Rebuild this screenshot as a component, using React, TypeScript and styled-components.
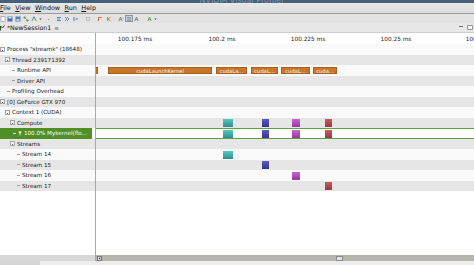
import React from "react";
import styled, { createGlobalStyle, css } from "styled-components";

const GlobalStyle = createGlobalStyle`
  html, body { margin: 0; padding: 0; background: #ffffff; }
  body { font-family: "DejaVu Sans", "Liberation Sans", sans-serif; }
  #root { width: 474px; height: 265px; }
`;

const Window = styled.div`
  width: 474px;
  height: 265px;
  display: flex;
  flex-direction: column;
  overflow: hidden;
  background: #ffffff;
`;

const TitleBar = styled.div`
  height: 3px;
  flex: none;
  background: #46607a;
  display: flex;
  justify-content: center;
  align-items: flex-end;
  overflow: hidden;
`;

const TitleText = styled.span`
  font-size: 8px;
  line-height: 5px;
  color: #7f96ad;
  white-space: nowrap;
  margin-left: 10px;
`;

const MenuBar = styled.div`
  height: 10px;
  flex: none;
  display: flex;
  align-items: center;
  gap: 4.5px;
  background: linear-gradient(#e8e8e8, #dcdcdc);
  font-size: 6.4px;
  color: #111;
`;

const MenuItem = styled.span`
  white-space: nowrap;
`;

const Mnemonic = styled.u`
  text-decoration-thickness: 0.6px;
  text-underline-offset: 0.8px;
`;

const MenuRule = styled.div`
  height: 1px;
  flex: none;
  background: #9c9c9c;
`;

const Toolbar = styled.div`
  height: 9px;
  flex: none;
  display: flex;
  align-items: center;
  background: #e3e3e3;
`;

const ToolSlot = styled.span<{ $ml: number; $w?: number; $boxed?: boolean }>`
  display: flex;
  align-items: center;
  justify-content: center;
  flex: none;
  width: ${(p) => p.$w ?? 6}px;
  height: 7px;
  margin-left: ${(p) => p.$ml}px;
  ${(p) =>
    p.$boxed &&
    css`
      background: #c9d0d8;
      box-shadow: inset 0 0 0 1px #8c96a2;
    `}
`;

const TabBar = styled.div`
  height: 10px;
  flex: none;
  box-sizing: border-box;
  display: flex;
  align-items: center;
  background: #e7e7e7;
  border-bottom: 1px solid #cdcdcd;
`;

const Tab = styled.div`
  display: flex;
  align-items: center;
  height: 100%;
  font-size: 6.2px;
  color: #111;
  white-space: nowrap;
`;

const TabLabel = styled.span`
  margin-left: 2px;
`;

const TabMenu = styled.span`
  margin-left: 3px;
  color: #777;
  font-size: 5.5px;
`;

const WinControls = styled.div`
  margin-left: auto;
  display: flex;
  align-items: center;
  gap: 3px;
  padding-right: 1px;
`;

const Workspace = styled.div`
  flex: 1;
  min-height: 0;
  display: flex;
`;

const TreePane = styled.div`
  width: 95px;
  flex: none;
  display: flex;
  flex-direction: column;
  background: #ffffff;
  overflow: hidden;
`;

const Sash = styled.div`
  width: 1px;
  flex: none;
  background: #a9a9a9;
`;

const TimelinePane = styled.div`
  flex: 1;
  min-width: 0;
  display: flex;
  flex-direction: column;
  background: #ffffff;
  overflow: hidden;
`;

const Header = styled.div`
  height: 11px;
  flex: none;
  position: relative;
  background: #ffffff;
`;

const TickLabel = styled.span`
  position: absolute;
  top: 2.5px;
  transform: translateX(-50%);
  font-size: 5.8px;
  line-height: 7px;
  color: #1c1c1c;
  white-space: nowrap;
`;

const Row = styled.div<{ $alt: boolean }>`
  height: 10.5px;
  flex: none;
  position: relative;
  background: ${(p) => (p.$alt ? "#e6e6e6" : "#fafafa")};
`;

const TreeRow = styled(Row)<{ $selected?: boolean; $pl: number }>`
  display: flex;
  align-items: center;
  padding-left: ${(p) => p.$pl}px;
  font-size: 5.6px;
  color: #1a1a1a;
  white-space: nowrap;
  overflow: hidden;
  ${(p) =>
    p.$selected &&
    css`
      background: #4f8f26;
      color: #ffffff;
      margin-right: 3px;
    `}
`;

const TrackRow = styled(Row)<{ $selected?: boolean }>`
  ${(p) =>
    p.$selected &&
    css`
      background: #ffffff;
      box-shadow: inset 0 1px 0 #5f9d3f, inset 0 -1px 0 #5f9d3f;
    `}
`;

const Expander = styled.span<{ $mr: number }>`
  position: relative;
  flex: none;
  box-sizing: border-box;
  width: 5px;
  height: 5px;
  margin-right: ${(p) => p.$mr}px;
  border: 0.7px solid #a4a4a4;
  background: #f4f4f4;
  &::after {
    content: "";
    position: absolute;
    left: 0.8px;
    right: 0.8px;
    top: 1.8px;
    height: 0.8px;
    background: #6b6b6b;
  }
`;

const LeafDot = styled.span<{ $mr: number; $light?: boolean }>`
  flex: none;
  width: 5px;
  height: 5px;
  margin-right: ${(p) => p.$mr}px;
  display: flex;
  align-items: center;
  justify-content: center;
  &::after {
    content: "";
    width: 2.5px;
    height: 0.8px;
    background: ${(p) => (p.$light ? "#d8ecd0" : "#a0a0a0")};
  }
`;

const FilterIcon = styled.svg`
  flex: none;
  width: 4px;
  height: 5px;
  margin-right: 2px;
`;

const Filler = styled.div`
  flex: 1;
  background: #ffffff;
`;

const ApiBar = styled.div`
  position: absolute;
  top: 1.6px;
  height: 7.4px;
  box-sizing: border-box;
  background: #c7772c;
  border: 0.5px solid #a95f1d;
  color: #fff4e8;
  font-size: 5.2px;
  line-height: 6.4px;
  text-align: center;
  overflow: hidden;
  white-space: nowrap;
`;

const Kernel = styled.div<{ $top: string; $bottom: string }>`
  position: absolute;
  top: 1.5px;
  height: 8px;
  background: linear-gradient(${(p) => p.$top}, ${(p) => p.$bottom});
`;

const ScrollRow = styled.div`
  height: 6px;
  flex: none;
  display: flex;
`;

const ScrollLeft = styled.div`
  width: 95px;
  flex: none;
  background: #d8d8d8;
`;

const ScrollTrack = styled.div`
  flex: 1;
  position: relative;
  background: #b5b5ad;
  display: flex;
  align-items: center;
`;

const ArrowBtn = styled.span`
  width: 5px;
  height: 5px;
  margin-left: 1px;
  box-sizing: border-box;
  background: #e8e8e8;
  border: 0.5px solid #777;
  display: flex;
  align-items: center;
  justify-content: center;
`;

const Thumb = styled.span`
  position: absolute;
  top: 0.5px;
  height: 5px;
  width: 7px;
  box-sizing: border-box;
  background: #e2e2e2;
  border: 0.5px solid #8a8a8a;
`;

const StatusBar = styled.div`
  height: 4px;
  flex: none;
  display: flex;
  background: #ededed;
`;

const StatusSeg = styled.div`
  width: 40px;
  background: #d6d6d6;
`;

/* ---------- icons ---------- */

const Ico = ({ children, w = 6 }: { children: React.ReactNode; w?: number }) => (
  <svg width={w} height={6} viewBox={`0 0 ${w} 6`}>
    {children}
  </svg>
);

type ToolItem = { ml: number; w?: number; boxed?: boolean; icon: React.ReactNode };

const toolItems: ToolItem[] = [
  { ml: 0, icon: <Ico><rect x="1" y="0.5" width="4" height="5" fill="#fff" stroke="#8a8a8a" strokeWidth="0.6" /></Ico> },
  { ml: 1, icon: <Ico><rect x="0.5" y="0.5" width="5" height="5" fill="#4a6fb0" /><rect x="1.5" y="0.8" width="3" height="1.6" fill="#e8eef8" /></Ico> },
  { ml: 2, icon: <Ico><rect x="0.5" y="0.5" width="5" height="5" fill="#5b7bb8" /><rect x="1.5" y="3.2" width="3" height="1.6" fill="#dfe6f4" /></Ico> },
  { ml: 2, icon: <Ico><circle cx="1.5" cy="1.5" r="1.1" fill="#4c9a3c" /><circle cx="4.5" cy="4.5" r="1.1" fill="#4c9a3c" /><path d="M1.5 1.5 L4.5 4.5" stroke="#3a7a2c" strokeWidth="0.6" /></Ico> },
  { ml: 2, icon: <Ico><path d="M0.8 5 L3 1 L5.2 5" fill="none" stroke="#3f8f5a" strokeWidth="0.9" /><circle cx="3" cy="1.2" r="0.8" fill="#5a7bc0" /></Ico> },
  { ml: 2, w: 3, icon: <Ico w={3}><path d="M0.3 2.5 L2.7 2.5 L1.5 4 Z" fill="#444" /></Ico> },
  { ml: 5, w: 3, icon: <Ico w={3}><circle cx="1.5" cy="3.5" r="0.6" fill="#888" /></Ico> },
  { ml: 6, icon: <Ico><path d="M1 1.5 L5 1.5 M1 3 L4 3 M1 4.5 L5 4.5" stroke="#4d6fb8" strokeWidth="0.8" /></Ico> },
  { ml: 2, icon: <Ico><path d="M1 1 L3 3 L1 5 M3 1 L5 3 L3 5" fill="none" stroke="#4d6fb8" strokeWidth="0.8" /></Ico> },
  { ml: 3, icon: <Ico><path d="M1 1 L1 5 M2.5 3 L5 3" stroke="#4d6fb8" strokeWidth="0.9" /></Ico> },
  { ml: 6, icon: <Ico><rect x="1.5" y="1.5" width="3" height="3" fill="none" stroke="#a8a8a8" strokeWidth="0.6" /></Ico> },
  { ml: 6, icon: <Ico><path d="M1.5 5 L1.5 1.5 L4.5 1.5" fill="none" stroke="#c4622a" strokeWidth="0.9" /></Ico> },
  { ml: 3, icon: <Ico><path d="M1.5 1 L1.5 5 M4.5 1 L1.8 3 L4.5 5" fill="none" stroke="#d07a2a" strokeWidth="0.9" /></Ico> },
  { ml: 6, icon: <Ico><path d="M0.8 5 L2.5 1 L4.2 5 M1.5 3.6 L3.5 3.6" fill="none" stroke="#666" strokeWidth="0.7" /><path d="M4.8 2 L5.8 2" stroke="#666" strokeWidth="0.6" /></Ico> },
  { ml: 1, w: 8, boxed: true, icon: <Ico><rect x="1" y="1" width="4" height="4" fill="#8c9db2" /><path d="M1 3 L5 3" stroke="#eef" strokeWidth="0.5" /></Ico> },
  { ml: 1, icon: <Ico><path d="M0.8 5 L2.5 1 L4.2 5 M1.5 3.6 L3.5 3.6" fill="none" stroke="#666" strokeWidth="0.7" /></Ico> },
  { ml: 7, icon: <Ico><path d="M0.8 5 L2.5 1 L4.2 5 M1.5 3.6 L3.5 3.6" fill="none" stroke="#3f9a4a" strokeWidth="0.8" /></Ico> },
  { ml: 1, w: 3, icon: <Ico w={3}><path d="M0.3 2.5 L2.7 2.5 L1.5 4 Z" fill="#444" /></Ico> },
];

/* ---------- data ---------- */

type Marker = "box" | "dot";
type TreeItem = {
  label: string;
  pl: number;
  marker: Marker;
  gap: number;
  selected?: boolean;
};

const treeItems: TreeItem[] = [
  { label: 'Process "streamk" (18648)', pl: 0, marker: "box", gap: 2 },
  { label: "Thread 239171392", pl: 5, marker: "box", gap: 2 },
  { label: "Runtime API", pl: 11, marker: "dot", gap: 1 },
  { label: "Driver API", pl: 11, marker: "dot", gap: 1 },
  { label: "Profiling Overhead", pl: 6, marker: "dot", gap: 1 },
  { label: "[0] GeForce GTX 970", pl: 0, marker: "box", gap: 2 },
  { label: "Context 1 (CUDA)", pl: 5, marker: "box", gap: 2 },
  { label: "Compute", pl: 10, marker: "box", gap: 2 },
  { label: "100.0% Mykernel(flo...", pl: 12, marker: "dot", gap: 1, selected: true },
  { label: "Streams", pl: 10, marker: "box", gap: 2 },
  { label: "Stream 14", pl: 16, marker: "dot", gap: 1 },
  { label: "Stream 15", pl: 16, marker: "dot", gap: 1 },
  { label: "Stream 16", pl: 16, marker: "dot", gap: 1 },
  { label: "Stream 17", pl: 16, marker: "dot", gap: 1 },
];

const ticks = [
  { x: 39, label: "100.175 ms" },
  { x: 126, label: "100.2 ms" },
  { x: 212, label: "100.225 ms" },
  { x: 300, label: "100.25 ms" },
  { x: 387, label: "100.275 ms" },
];

const apiCalls = [
  { left: -1, width: 2.5, label: "" },
  { left: 12, width: 104, label: "cudaLaunchKernel" },
  { left: 120, width: 31, label: "cudaLa..." },
  { left: 155, width: 27, label: "cudaL..." },
  { left: 185, width: 29, label: "cudaL..." },
  { left: 217, width: 24, label: "cuda..." },
];

const kernelColors = [
  { left: 127.3, width: 9.4, top: "#5cc4c4", bottom: "#2f8e8e" },
  { left: 165.7, width: 7.6, top: "#5a5ac0", bottom: "#33338e" },
  { left: 196.3, width: 7.7, top: "#c765d2", bottom: "#95389f" },
  { left: 229, width: 7.3, top: "#c85a64", bottom: "#983840" },
];

// which kernels appear on which row index
const kernelRows: Record<number, number[]> = {
  7: [0, 1, 2, 3],
  8: [0, 1, 2, 3],
  10: [0],
  11: [1],
  12: [2],
  13: [3],
};

export default function App() {
  return (
    <>
      <GlobalStyle />
      <Window>
        <TitleBar>
          <TitleText>NVIDIA Visual Profiler</TitleText>
        </TitleBar>
        <MenuBar>
          <MenuItem><Mnemonic>F</Mnemonic>ile</MenuItem>
          <MenuItem><Mnemonic>V</Mnemonic>iew</MenuItem>
          <MenuItem><Mnemonic>W</Mnemonic>indow</MenuItem>
          <MenuItem><Mnemonic>R</Mnemonic>un</MenuItem>
          <MenuItem><Mnemonic>H</Mnemonic>elp</MenuItem>
        </MenuBar>
        <MenuRule />
        <Toolbar>
          {toolItems.map((t, i) => (
            <ToolSlot key={i} $ml={t.ml} $w={t.w} $boxed={t.boxed}>
              {t.icon}
            </ToolSlot>
          ))}
        </Toolbar>
        <TabBar>
          <Tab>
            <svg width="5" height="6" viewBox="0 0 5 6">
              <path d="M0.5 5.5 L0.5 1 L2.5 3 L4.5 0.5" fill="none" stroke="#2f4f2f" strokeWidth="1" />
            </svg>
            <TabLabel>*NewSession1</TabLabel>
            <TabMenu>≡</TabMenu>
          </Tab>
          <WinControls>
            <svg width="6" height="5" viewBox="0 0 6 5">
              <path d="M1 1.5 L5 1.5" stroke="#555" strokeWidth="0.8" />
            </svg>
            <svg width="6" height="5" viewBox="0 0 6 5">
              <rect x="0.7" y="0.7" width="4.6" height="3.6" fill="#fff" stroke="#555" strokeWidth="0.6" />
            </svg>
          </WinControls>
        </TabBar>
        <Workspace>
          <TreePane>
            <Header />
            {treeItems.map((it, i) => (
              <TreeRow key={i} $alt={i % 2 === 1} $pl={it.pl} $selected={it.selected}>
                {it.marker === "box" ? (
                  <Expander $mr={it.gap} />
                ) : (
                  <LeafDot $mr={it.gap} $light={it.selected} />
                )}
                {it.selected && (
                  <FilterIcon viewBox="0 0 4 5">
                    <path d="M0.2 0.6 L3.8 0.6 L2.4 2.6 L2.4 4.6 L1.6 4 L1.6 2.6 Z" fill="#ffffff" />
                  </FilterIcon>
                )}
                {it.label}
              </TreeRow>
            ))}
            <Filler />
          </TreePane>
          <Sash />
          <TimelinePane>
            <Header>
              {ticks.map((t) => (
                <TickLabel key={t.label} style={{ left: t.x }}>
                  {t.label}
                </TickLabel>
              ))}
            </Header>
            {treeItems.map((it, i) => (
              <TrackRow key={i} $alt={i % 2 === 1} $selected={it.selected}>
                {i === 2 &&
                  apiCalls.map((c, j) => (
                    <ApiBar key={j} style={{ left: c.left, width: c.width }}>
                      {c.label}
                    </ApiBar>
                  ))}
                {(kernelRows[i] || []).map((k) => {
                  const kc = kernelColors[k];
                  return (
                    <Kernel
                      key={k}
                      $top={kc.top}
                      $bottom={kc.bottom}
                      style={{ left: kc.left, width: kc.width }}
                    />
                  );
                })}
              </TrackRow>
            ))}
            <Filler />
          </TimelinePane>
        </Workspace>
        <ScrollRow>
          <ScrollLeft />
          <Sash />
          <ScrollTrack>
            <ArrowBtn>
              <svg width="3" height="3" viewBox="0 0 3 3">
                <path d="M2.2 0.3 L0.6 1.5 L2.2 2.7 Z" fill="#333" />
              </svg>
            </ArrowBtn>
            <Thumb style={{ left: 240 }} />
          </ScrollTrack>
        </ScrollRow>
        <StatusBar>
          <StatusSeg />
        </StatusBar>
      </Window>
    </>
  );
}
